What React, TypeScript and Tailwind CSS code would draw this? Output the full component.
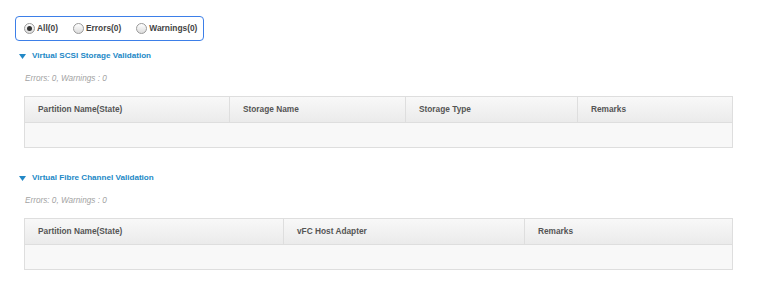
import type { ReactNode } from 'react';

const font = { fontFamily: '"Liberation Sans", Arial, sans-serif' };

function Radio({ label, checked }: { label: string; checked?: boolean }) {
	return (
		<label className="flex items-center gap-[2px]">
			<span className="flex h-[11px] w-[11px] items-center justify-center rounded-full border border-[#9a9a9a] bg-gradient-to-b from-[#ffffff] to-[#dcdcdc]">
				{checked && <span className="h-[5px] w-[5px] rounded-full bg-[#333]" />}
			</span>
			<span className="text-[8.4px] font-bold text-[#444]">{label}</span>
		</label>
	);
}

function SectionTitle({ children }: { children: ReactNode }) {
	return (
		<div className="flex h-[12px] items-center pl-[19px]">
			<svg width="7" height="5" viewBox="0 0 7 5" className="mr-[6px]">
				<path d="M0 0 H7 L3.5 5 Z" fill="#2288c6" />
			</svg>
			<span className="text-[8.1px] font-bold text-[#2288c6]">{children}</span>
		</div>
	);
}

function Summary() {
	return (
		<div className="mt-[11px] flex h-[12px] items-center pl-[25px] text-[8.2px] italic text-[#a3a3a3]">
			Errors: 0, Warnings : 0
		</div>
	);
}

function Table({ columns, widths }: { columns: string[]; widths: string }) {
	return (
		<div className="ml-[24px] mt-[11px] w-[709px] border border-[#dedede]">
			<div className={`grid h-[25px] bg-gradient-to-b from-[#f8f8f8] to-[#ebebeb] ${widths}`}>
				{columns.map((c, i) => (
					<div
						key={c}
						className={`flex items-center pl-[13px] text-[8.3px] font-bold text-[#555] ${i > 0 ? 'border-l border-[#dedede]' : ''}`}
					>
						{c}
					</div>
				))}
			</div>
			<div className="h-[25px] border-t border-[#dedede] bg-[#f8f8f8]" />
		</div>
	);
}

export default function App() {
	return (
		<div className="h-[300px] w-[768px] bg-white pt-[16px]" style={font}>
			<div className="ml-[15px] flex h-[25px] w-[189px] items-center gap-[15px] rounded-[4px] border-[1.5px] border-[#3d7fe8] pl-[8px]">
				<Radio label="All(0)" checked />
				<Radio label="Errors(0)" />
				<Radio label="Warnings(0)" />
			</div>

			<div className="mt-[9px]">
				<SectionTitle>Virtual SCSI Storage Validation</SectionTitle>
				<Summary />
				<Table
					columns={['Partition Name(State)', 'Storage Name', 'Storage Type', 'Remarks']}
					widths="grid-cols-[204px_176px_172px_1fr]"
				/>
			</div>

			<div className="mt-[24px]">
				<SectionTitle>Virtual Fibre Channel Validation</SectionTitle>
				<Summary />
				<Table
					columns={['Partition Name(State)', 'vFC Host Adapter', 'Remarks']}
					widths="grid-cols-[258px_241px_1fr]"
				/>
			</div>
		</div>
	);
}
